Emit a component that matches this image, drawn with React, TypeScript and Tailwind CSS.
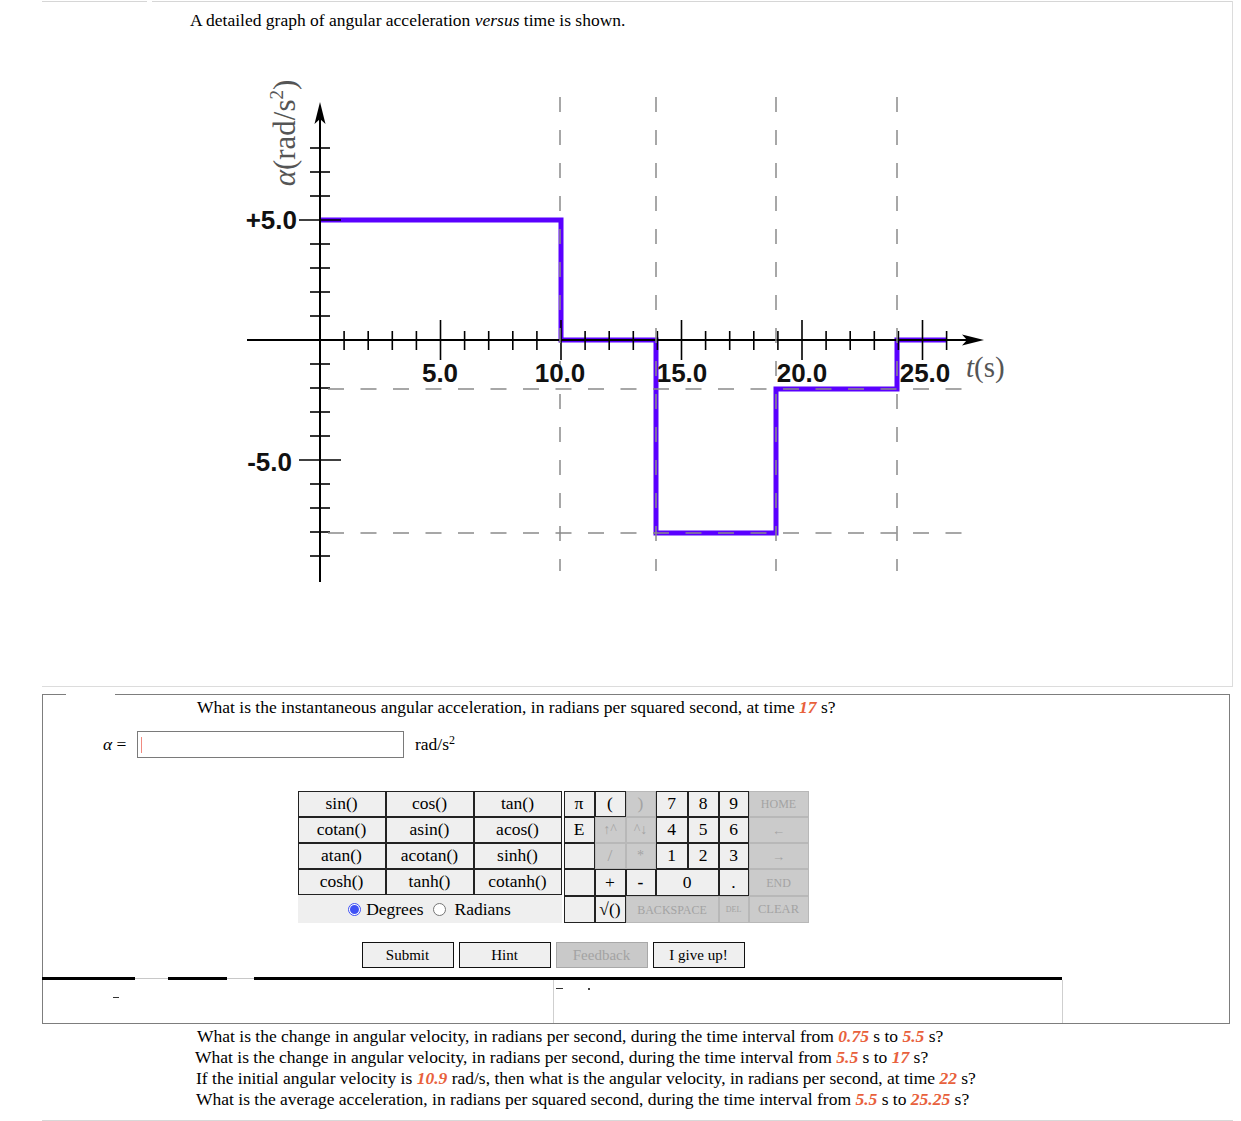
import React from "react";

const X = (t: number) => 320 + 24.1 * t;
const Y = (a: number) => 340 - 24 * a;

function Graph() {
  const xt = Array.from({ length: 26 }, (_, i) => i + 1);
  const yt = [-9, -8, -7, -6, -5, -4, -3, -2, -1, 1, 2, 3, 4, 5, 6, 7, 8];
  const vDash = [560, 656, 776, 897];
  const hDash = [389, 533];
  return (
    <svg
      width={800}
      height={540}
      viewBox="230 60 800 540"
      className="block ml-[188px]"
    >
      {/* blue step function */}
      <path
        d="M320 220 H561 V340 H656 V533 H776 V389 H897 V340 H946"
        fill="none"
        stroke="#5a00ff"
        strokeWidth={5}
        strokeLinejoin="miter"
      />
      {/* axes */}
      <line x1={247} y1={340} x2={968} y2={340} stroke="#000" strokeWidth={2} />
      <polygon points="984,340 962,334.5 967,340 962,345.5" fill="#000" />
      <line x1={320} y1={582} x2={320} y2={118} stroke="#000" strokeWidth={2} />
      <polygon points="320,102 314.5,124 320,119 325.5,124" fill="#000" />
      {xt.map((t) => {
        const major = t % 5 === 0;
        return (
          <line
            key={"x" + t}
            x1={X(t)}
            x2={X(t)}
            y1={major ? 320 : 331}
            y2={major ? 360 : 350}
            stroke="#000"
            strokeWidth={1.6}
          />
        );
      })}
      {yt.map((a) => {
        const major = a === 5 || a === -5;
        return (
          <line
            key={"y" + a}
            x1={major ? 299 : 310}
            x2={major ? 341 : 330}
            y1={Y(a)}
            y2={Y(a)}
            stroke="#000"
            strokeWidth={1.6}
          />
        );
      })}
      {/* dashed guide lines */}
      {vDash.map((x) => (
        <line
          key={"vd" + x}
          x1={x}
          x2={x}
          y1={97}
          y2={571}
          stroke="#8a8a8a"
          strokeOpacity={0.75}
          strokeWidth={2}
          strokeDasharray="15 18"
        />
      ))}
      {hDash.map((y) => (
        <line
          key={"hd" + y}
          x1={328}
          x2={965}
          y1={y}
          y2={y}
          stroke="#8a8a8a"
          strokeOpacity={0.75}
          strokeWidth={2}
          strokeDasharray="16 16.5"
        />
      ))}
      {/* numeric labels */}
      <g
        fontFamily="'Liberation Sans', Arial, sans-serif"
        fontWeight={700}
        fontSize={26}
        fill="#111"
      >
        <text x={297} y={229} textAnchor="end">+5.0</text>
        <text x={292} y={471} textAnchor="end">-5.0</text>
        <text x={440} y={382} textAnchor="middle">5.0</text>
        <text x={560} y={382} textAnchor="middle">10.0</text>
        <text x={682} y={382} textAnchor="middle">15.0</text>
        <text x={802} y={382} textAnchor="middle">20.0</text>
        <text x={925} y={382} textAnchor="middle">25.0</text>
      </g>
      {/* axis titles */}
      <text
        x={966}
        y={377}
        fontFamily="'Liberation Serif', 'Times New Roman', serif"
        fontSize={29}
        fill="#555"
      >
        <tspan fontStyle="italic">t</tspan>
        <tspan>(s)</tspan>
      </text>
      <text
        transform="translate(295 133) rotate(-90)"
        textAnchor="middle"
        fontFamily="'Liberation Serif', 'Times New Roman', serif"
        fontSize={31}
        fill="#555"
      >
        <tspan fontStyle="italic">α</tspan>
        <tspan>(rad/s</tspan>
        <tspan fontSize={19} dy={-12}>2</tspan>
        <tspan dy={12}>)</tspan>
      </text>
    </svg>
  );
}

function Key({
  children,
  dis,
  cls,
}: {
  children?: React.ReactNode;
  dis?: boolean;
  cls?: string;
}) {
  return (
    <div
      className={
        "flex items-center justify-center border leading-none " +
        (dis
          ? "bg-[#cbcbcb] border-[#b8b8b8] text-[#a3a3a3] "
          : "bg-[#efefef] border-[#222] text-black ") +
        (cls || "")
      }
    >
      {children}
    </div>
  );
}

function Keypad() {
  const fn = [
    "sin()",
    "cos()",
    "tan()",
    "cotan()",
    "asin()",
    "acos()",
    "atan()",
    "acotan()",
    "sinh()",
    "cosh()",
    "tanh()",
    "cotanh()",
  ];
  return (
    <div className="mt-[33px] w-[1020px] flex justify-center gap-[2px]">
      <div className="grid grid-cols-[88px_88px_88px] grid-rows-[26px_26px_26px_26px_28px]">
        {fn.map((f) => (
          <Key key={f}>{f}</Key>
        ))}
        <div className="col-span-3 bg-[#efefef] flex items-center justify-center">
          <span className="w-[13px] h-[13px] rounded-full border border-[#3f51f5] bg-white flex items-center justify-center">
            <span className="w-[9px] h-[9px] rounded-full bg-[#3f51f5]" />
          </span>
          <span className="ml-[5px]">Degrees</span>
          <span className="ml-[10px] w-[13px] h-[13px] rounded-full border border-[#767676] bg-white" />
          <span className="ml-[8px]">Radians</span>
        </div>
      </div>
      <div className="grid grid-cols-[31px_31px_30px_32px_31px_30px_60px] grid-rows-[26px_26px_26px_27px_27px]">
        <Key>π</Key>
        <Key>(</Key>
        <Key dis>)</Key>
        <Key>7</Key>
        <Key>8</Key>
        <Key>9</Key>
        <Key dis cls="text-[12px]">HOME</Key>
        <Key>E</Key>
        <Key dis cls="text-[14px]">↑^</Key>
        <Key dis cls="text-[14px]">^↓</Key>
        <Key>4</Key>
        <Key>5</Key>
        <Key>6</Key>
        <Key dis cls="text-[13px]">←</Key>
        <Key />
        <Key dis>/</Key>
        <Key dis cls="text-[14px]">*</Key>
        <Key>1</Key>
        <Key>2</Key>
        <Key>3</Key>
        <Key dis cls="text-[13px]">→</Key>
        <Key />
        <Key>+</Key>
        <Key cls="font-bold">-</Key>
        <Key cls="col-span-2">0</Key>
        <Key>.</Key>
        <Key dis cls="text-[12px]">END</Key>
        <Key />
        <Key>√()</Key>
        <Key dis cls="col-span-3 text-[12px]">BACKSPACE</Key>
        <Key dis cls="text-[8px]">DEL</Key>
        <Key dis cls="text-[12.5px]">CLEAR</Key>
      </div>
    </div>
  );
}

function Btn({ children, dis }: { children: React.ReactNode; dis?: boolean }) {
  return (
    <div
      className={
        "w-[92px] h-[26px] flex items-center justify-center text-[15px] border " +
        (dis
          ? "bg-[#c9c9c9] border-[#a8a8a8] text-[#a3a3a3]"
          : "bg-[#efefef] border-[#111] text-black")
      }
    >
      {children}
    </div>
  );
}

const Num = ({ children }: { children: React.ReactNode }) => (
  <span className="text-[#e8613c] font-bold italic">{children}</span>
);

export default function App() {
  return (
    <div className="w-[1241px] h-[1121px] bg-white text-black font-['Liberation_Serif','Times_New_Roman',serif] text-[17.5px] pt-[1px] overflow-hidden">
      {/* graph section */}
      <div className="ml-[42px] w-[1191px] h-[686px] border-r border-b border-[#dcdcdc] flex flex-col">
        <div className="flex h-[1px] shrink-0">
          <div className="w-[105px] bg-[#d6d6d6]" />
          <div className="w-[5px]" />
          <div className="flex-1 bg-[#d6d6d6]" />
        </div>
        <div className="pl-[148px] pt-[8px] leading-[20px] h-[58px] shrink-0">
          A detailed graph of angular acceleration <i>versus</i> time is shown.
        </div>
        <Graph />
      </div>

      {/* question box */}
      <div className="mt-[7px] ml-[42px] w-[1188px] border-l border-r border-b border-[#7d7d7d]">
        <div className="flex h-[1px]">
          <div className="w-[23px] bg-[#7d7d7d]" />
          <div className="w-[49px]" />
          <div className="flex-1 bg-[#7d7d7d]" />
        </div>
        <div className="mt-[2px] pl-[154px] leading-[20px]">
          What is the instantaneous angular acceleration, in radians per squared second, at time <Num>17</Num> s?
        </div>
        <div className="mt-[14px] h-[27px] pl-[60px] flex items-center">
          <span className="w-[34px] whitespace-pre">
            <i>α</i> =
          </span>
          <div className="w-[267px] h-[27px] border border-[#7a7a7a] flex items-center">
            <div className="ml-[3px] w-[1px] h-[16px] bg-[#f08a80]" />
          </div>
          <span className="ml-[11px]">
            rad/s<sup className="text-[12px]">2</sup>
          </span>
        </div>
        <Keypad />
        <div className="mt-[19px] w-[1020px] flex justify-center gap-[5px]">
          <Btn>Submit</Btn>
          <Btn>Hint</Btn>
          <Btn dis>Feedback</Btn>
          <Btn>I give up!</Btn>
        </div>
        <div className="mt-[9px] w-[1020px] h-[3px] flex items-center -ml-[1px]">
          <div className="w-[93px] h-[3px] bg-black" />
          <div className="w-[33px] h-[1px] bg-[#c8c8c8]" />
          <div className="w-[59px] h-[3px] bg-black" />
          <div className="w-[27px] h-[1px] bg-[#c8c8c8]" />
          <div className="flex-1 h-[3px] bg-black" />
        </div>
        <div className="h-[43px] flex">
          <div className="w-[510px] pt-[17px] pl-[70px]">
            <div className="w-[6px] h-[1px] bg-[#333]" />
          </div>
          <div className="w-[1px] bg-[#cfcfcf]" />
          <div className="w-[508px] pt-[8px] pl-[2px] flex">
            <div className="w-[7px] h-[1px] bg-[#333]" />
            <div className="ml-[25px] w-[2px] h-[2px] bg-[#444]" />
          </div>
          <div className="w-[1px] bg-[#cfcfcf]" />
        </div>
      </div>

      {/* follow-up questions */}
      <div className="mt-[2px] pl-[196px] leading-[21px]">
        <div className="pl-[1px]">
          What is the change in angular velocity, in radians per second, during the time interval from <Num>0.75</Num> s to <Num>5.5</Num> s?
        </div>
        <div className="-ml-[1px]">
          What is the change in angular velocity, in radians per second, during the time interval from <Num>5.5</Num> s to <Num>17</Num> s?
        </div>
        <div>
          If the initial angular velocity is <Num>10.9</Num> rad/s, then what is the angular velocity, in radians per second, at time <Num>22</Num> s?
        </div>
        <div>
          What is the average acceleration, in radians per squared second, during the time interval from <Num>5.5</Num> s to <Num>25.25</Num> s?
        </div>
      </div>
      <div className="mt-[10px] ml-[42px] w-[1191px] h-[1px] bg-[#d8d8d8]" />
    </div>
  );
}
